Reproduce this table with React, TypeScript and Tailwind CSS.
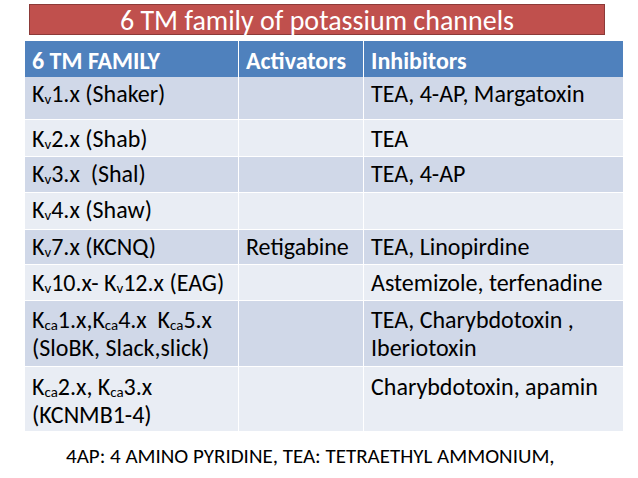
import React from 'react';

type Cell = React.ReactNode;

// K with subscript, as on the slide
const K = ({ sub }: { sub: string }) => (
  <>
    K<sub className="text-[0.62em] leading-none relative top-[0.15em] align-baseline">{sub}</sub>
  </>
);

const rows: { h: string; pt: string; cells: [Cell, Cell, Cell] }[] = [
  { h: 'h-[42px]', pt: 'pt-[3px]', cells: [<><K sub="v" />1.x (Shaker)</>, '', 'TEA, 4-AP, Margatoxin'] },
  { h: 'h-[36px]', pt: 'pt-[5px]', cells: [<><K sub="v" />2.x (Shab)</>, '', 'TEA'] },
  { h: 'h-[35px]', pt: 'pt-[3px]', cells: [<><K sub="v" />3.x&nbsp; (Shal)</>, '', 'TEA, 4-AP'] },
  { h: 'h-[36px]', pt: 'pt-[3px]', cells: [<><K sub="v" />4.x (Shaw)</>, '', ''] },
  { h: 'h-[34px]', pt: 'pt-[3px]', cells: [<><K sub="v" />7.x (KCNQ)</>, 'Retigabine', 'TEA, Linopirdine'] },
  { h: 'h-[35px]', pt: 'pt-[4px]', cells: [<><K sub="v" />10.x- <K sub="v" />12.x (EAG)</>, '', 'Astemizole, terfenadine'] },
  {
    h: 'h-[65px]',
    pt: 'pt-[5px]',
    cells: [
      <>
        <K sub="ca" />1.x,<K sub="ca" />4.x&nbsp; <K sub="ca" />5.x
        <br />
        (SloBK, Slack,slick)
      </>,
      '',
      <>
        TEA, Charybdotoxin ,<br />
        Iberiotoxin
      </>,
    ],
  },
  {
    h: 'h-[64px]',
    pt: 'pt-[6px]',
    cells: [
      <>
        <K sub="ca" />2.x, <K sub="ca" />3.x
        <br />
        (KCNMB1-4)
      </>,
      '',
      'Charybdotoxin, apamin',
    ],
  },
];

export default function App() {
  return (
    <div
      className="w-[638px] h-[478px] bg-white overflow-hidden"
      style={{ fontFamily: 'Carlito, Lato, "Open Sans", sans-serif' }}
    >
      {/* Title */}
      <div className="ml-[29px] mt-[4px] w-[576px] h-[31px] bg-[#c0504d] border border-[#8c3a38] flex items-center justify-center">
        <span className="text-white text-[28px] leading-none pt-[3px]">6 TM family of potassium channels</span>
      </div>

      {/* Table */}
      <div className="ml-[25px] mt-[6px] w-[598px] flex flex-col gap-[1px] bg-white">
        <div className="grid grid-cols-[213px_124px_259px] gap-[1px] h-[35px] text-white font-bold text-[24px]">
          <div className="bg-[#4f81bd] pl-[7px] flex items-center pt-[2px]">6 TM FAMILY</div>
          <div className="bg-[#4f81bd] pl-[7px] flex items-center pt-[2px]">Activators</div>
          <div className="bg-[#4f81bd] pl-[7px] flex items-center pt-[2px]">Inhibitors</div>
        </div>
        {rows.map((r, i) => (
          <div
            key={i}
            className={`grid grid-cols-[213px_124px_259px] gap-[1px] ${r.h} text-[24px] leading-[28px] text-black`}
          >
            {r.cells.map((c, j) => (
              <div
                key={j}
                className={`${i % 2 === 0 ? 'bg-[#d0d8e8]' : 'bg-[#e9edf4]'} pl-[7px] ${r.pt} whitespace-nowrap`}
              >
                {c}
              </div>
            ))}
          </div>
        ))}
      </div>

      {/* Footnote */}
      <div className="ml-[66px] mt-[13px] text-[21px] leading-[24px] text-black whitespace-nowrap">
        4AP: 4 AMINO PYRIDINE, TEA: TETRAETHYL AMMONIUM,
      </div>
    </div>
  );
}
